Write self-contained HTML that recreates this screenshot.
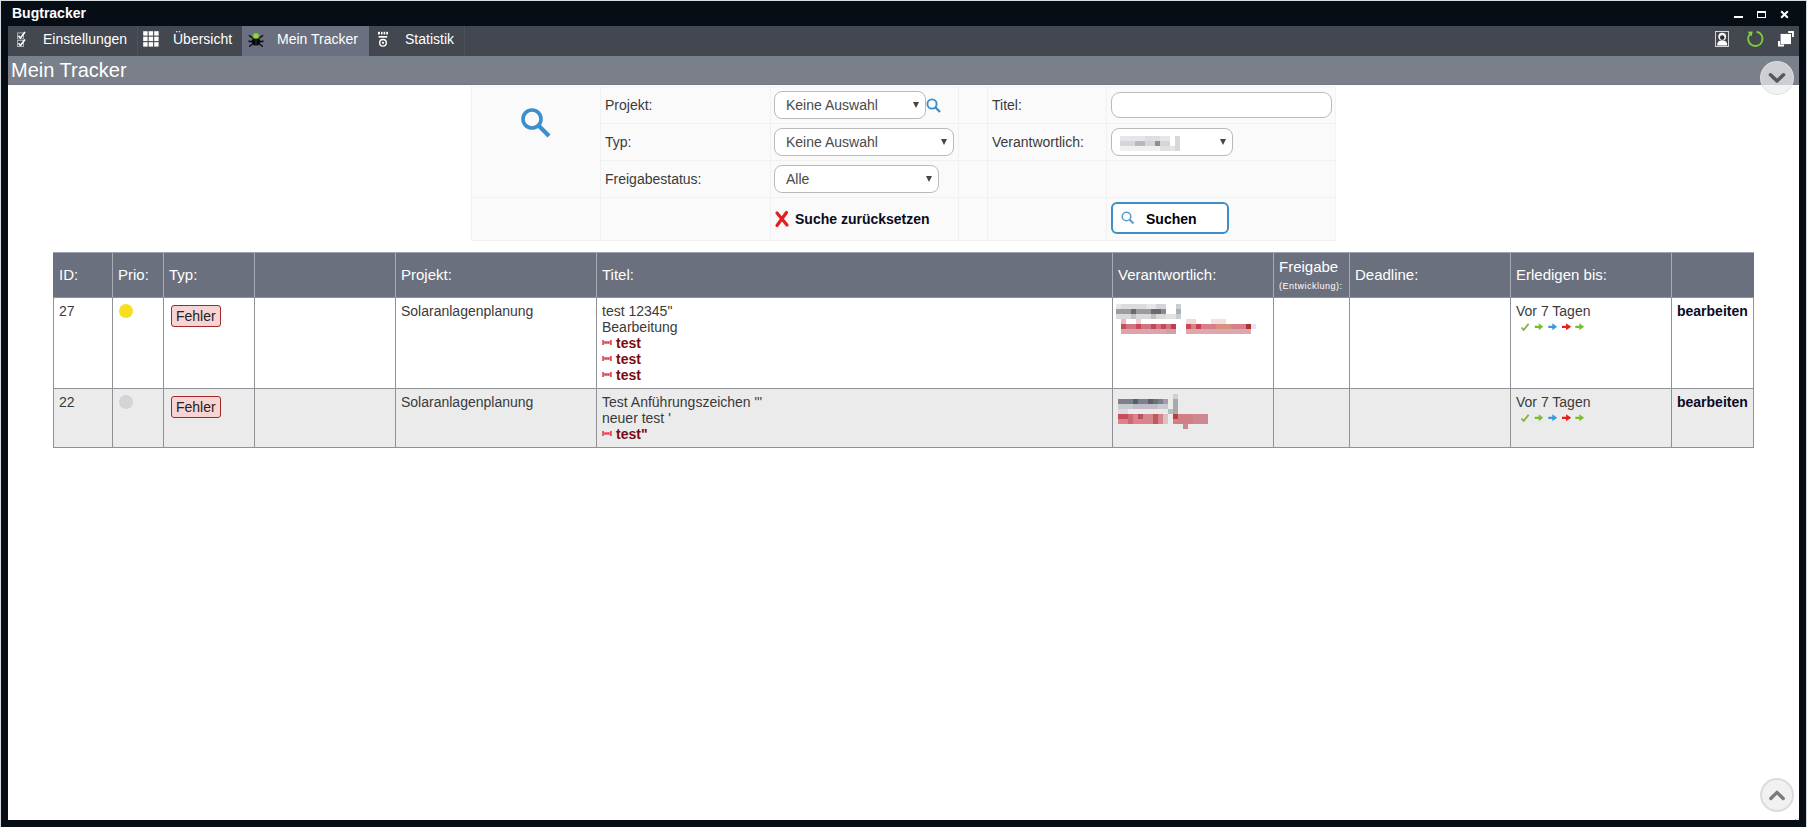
<!DOCTYPE html>
<html><head><meta charset="utf-8">
<style>
*{box-sizing:border-box;margin:0;padding:0}
html,body{width:1807px;height:827px;overflow:hidden;background:#d6d9dd;font-family:"Liberation Sans",sans-serif}
.a{position:absolute}
#frame{left:1px;top:1px;width:1805px;height:826px;background:#070d15}
#wtitle{left:12px;top:5px;color:#fff;font-weight:bold;font-size:14px;line-height:16px}
#menubar{left:8px;top:26px;width:1791px;height:30px;background:#43474f}
.tab{top:0;height:30px;color:#fff;font-size:14px;line-height:30px}
.tab .t{position:absolute;top:0}
.sep{top:0;width:1px;height:30px;background:#4d5159}
#titlebar{left:8px;top:56px;width:1791px;height:29px;background:linear-gradient(#77818c,#7a808a 40%,#7a7f8a)}
#ttext{left:3px;top:2px;color:#fff;font-size:20px;line-height:24px}
#content{left:8px;top:85px;width:1791px;height:735px;background:#fff}
.lbl{color:#3a3a3a;font-size:14px;line-height:16px}
.sel{background:#fff;border:1px solid #bababa;border-radius:8px;color:#4a4a4a;font-size:14px;line-height:16px}
.sel .v{position:absolute;left:11px;top:5px}
.sel .arr{position:absolute;top:10px;width:0;height:0;border-left:3px solid transparent;border-right:3px solid transparent;border-top:6px solid #454545}
.hd{color:#fff;font-size:15px;line-height:17px}
.bugi{position:absolute;width:10px;height:5px}
.bugi svg{display:block}
.cell{color:#3a3a3a;font-size:14px;line-height:16px}
</style></head><body>
<div class="a" id="frame"></div>
<div class="a" id="wtitle">Bugtracker</div>

<div class="a" id="menubar">
  <div class="a tab" style="left:234px;width:127px;background:#6b7080"></div>
  <div class="a sep" style="left:129px"></div>
  <div class="a sep" style="left:456px"></div>
  <div class="a" style="left:35px;top:0;color:#fff;font-size:14px;line-height:27px">Einstellungen</div>
  <div class="a" style="left:165px;top:0;color:#fff;font-size:14px;line-height:27px">Übersicht</div>
  <div class="a" style="left:269px;top:0;color:#fff;font-size:14px;line-height:27px">Mein Tracker</div>
  <div class="a" style="left:397px;top:0;color:#fff;font-size:14px;line-height:27px">Statistik</div>
</div>

<div class="a" id="titlebar"><div class="a" id="ttext">Mein Tracker</div><div class="a" style="left:0;top:28px;width:1791px;height:1px;background:#72777f"></div></div>
<div class="a" id="content"></div>

<!-- search form -->
<div class="a" style="left:471px;top:86px;width:865px;height:155px;background:#fafafa;border-top:1px solid #f0f2f4;border-left:1px solid #f2f2f2;border-bottom:1px solid #f1f1f1;border-right:1px solid #f4f4f4"></div>
<div class="a" style="left:600px;top:86px;width:1px;height:154px;background:#f1f1f1"></div>
<div class="a" style="left:770px;top:86px;width:1px;height:154px;background:#f1f1f1"></div>
<div class="a" style="left:958px;top:86px;width:1px;height:154px;background:#f1f1f1"></div>
<div class="a" style="left:987px;top:86px;width:1px;height:154px;background:#f1f1f1"></div>
<div class="a" style="left:1106px;top:86px;width:1px;height:154px;background:#f1f1f1"></div>
<div class="a" style="left:600px;top:123px;width:736px;height:1px;background:#f1f1f1"></div>
<div class="a" style="left:600px;top:160px;width:736px;height:1px;background:#f1f1f1"></div>
<div class="a" style="left:471px;top:197px;width:865px;height:1px;background:#f1f1f1"></div>

<svg class="a" style="left:518px;top:105px" width="36" height="36" viewBox="0 0 36 36"><circle cx="14" cy="14" r="9" fill="none" stroke="#3d8fcc" stroke-width="3.6"/><line x1="21" y1="21" x2="31" y2="31" stroke="#3d8fcc" stroke-width="4.2"/></svg>

<div class="a lbl" style="left:605px;top:97px">Projekt:</div>
<div class="a lbl" style="left:605px;top:134px">Typ:</div>
<div class="a lbl" style="left:605px;top:171px">Freigabestatus:</div>
<div class="a lbl" style="left:992px;top:97px">Titel:</div>
<div class="a lbl" style="left:992px;top:134px">Verantwortlich:</div>

<div class="a sel" style="left:774px;top:91px;width:152px;height:28px"><span class="v">Keine Auswahl</span><span class="arr" style="left:138px"></span></div>
<svg class="a" style="left:925px;top:97px" width="18" height="18" viewBox="0 0 18 18"><circle cx="7" cy="7" r="4.6" fill="none" stroke="#3d8fcc" stroke-width="1.9"/><line x1="10.5" y1="10.5" x2="15" y2="15" stroke="#3d8fcc" stroke-width="2.4"/></svg>
<div class="a sel" style="left:774px;top:128px;width:180px;height:28px"><span class="v">Keine Auswahl</span><span class="arr" style="left:166px"></span></div>
<div class="a sel" style="left:774px;top:165px;width:165px;height:28px"><span class="v">Alle</span><span class="arr" style="left:151px"></span></div>
<div class="a sel" style="left:1111px;top:92px;width:221px;height:26px;border-radius:9px"></div>
<div class="a sel" style="left:1111px;top:128px;width:122px;height:28px"><span class="arr" style="left:108px"></span></div>

<svg class="a" style="left:774px;top:210px" width="16" height="18" viewBox="0 0 16 18"><path d="M3 3 L13 15 M12.5 2.5 L3 15.5" stroke="#e41e1e" stroke-width="3.2" stroke-linecap="round" fill="none"/></svg>
<div class="a" style="left:795px;top:211px;font-size:14px;font-weight:bold;color:#0b0a24;line-height:16px">Suche zurücksetzen</div>

<div class="a" style="left:1111px;top:202px;width:118px;height:32px;border:2px solid #3d8ec9;border-radius:6px;background:#fff"></div>
<svg class="a" style="left:1120px;top:210px" width="16" height="16" viewBox="0 0 16 16"><circle cx="6.5" cy="6.5" r="4.3" fill="none" stroke="#5b9fd0" stroke-width="1.6"/><line x1="9.5" y1="9.5" x2="13.5" y2="13.5" stroke="#5b9fd0" stroke-width="2.2"/></svg>
<div class="a" style="left:1146px;top:211px;font-size:14px;font-weight:bold;color:#000;line-height:16px">Suchen</div>


<!-- window controls -->
<div class="a" style="left:1734px;top:16px;width:9px;height:2px;background:#fff"></div>
<div class="a" style="left:1757px;top:11px;width:9px;height:7px;border:1px solid #fff;border-top-width:2px"></div>
<svg class="a" style="left:1780px;top:10px" width="9" height="9" viewBox="0 0 9 9"><path d="M1.2 1.2 L7.8 7.8 M7.8 1.2 L1.2 7.8" stroke="#fff" stroke-width="2"/></svg>

<!-- menu icons -->
<svg class="a" style="left:16px;top:30px" width="12" height="18" viewBox="0 0 12 18"><rect x="1.5" y="2.9" width="6" height="6" fill="none" stroke="#a9abb0" stroke-width="1"/><rect x="1.5" y="10.5" width="6" height="6" fill="none" stroke="#a9abb0" stroke-width="1"/><path d="M2.5 5.8 L4.5 8 L9 2" stroke="#fff" stroke-width="1.6" fill="none"/><path d="M2.5 13.3 L4.5 15.5 L9 9.5" stroke="#fff" stroke-width="1.6" fill="none"/></svg>
<svg class="a" style="left:143px;top:31px" width="16" height="16" viewBox="0 0 16 16" fill="#fff"><rect x="0.2" y="0.2" width="4.4" height="4.4"/><rect x="5.7" y="0.2" width="4.4" height="4.4"/><rect x="11.2" y="0.2" width="4.4" height="4.4"/><rect x="0.2" y="5.7" width="4.4" height="4.4"/><rect x="5.7" y="5.7" width="4.4" height="4.4"/><rect x="11.2" y="5.7" width="4.4" height="4.4"/><rect x="0.2" y="11.2" width="4.4" height="4.4"/><rect x="5.7" y="11.2" width="4.4" height="4.4"/><rect x="11.2" y="11.2" width="4.4" height="4.4"/></svg>
<svg class="a" style="left:246px;top:29px" width="20" height="20" viewBox="0 0 20 20"><g stroke="#14151b" stroke-width="1.6" fill="none" stroke-linecap="round"><path d="M6.5 8.8 L3.4 6.6"/><path d="M13.5 8.8 L16.6 6.6"/><path d="M6 12.6 L3 12.4"/><path d="M14 12.6 L17 12.4"/><path d="M6.5 15 L3.8 17.2"/><path d="M13.5 15 L16.2 17.2"/></g><ellipse cx="10" cy="12.6" rx="4.3" ry="4" fill="#07070f"/><path d="M6.6 9.5 A3.4 3.4 0 0 1 13.4 9.5 L13.2 8.6 A3.2 3.8 0 0 0 6.8 8.6 Z" fill="#4d8a1e"/><ellipse cx="10" cy="6.8" rx="3.3" ry="3" fill="#9ccc52" stroke="#4d8a1e" stroke-width="0.7"/><line x1="10" y1="10.2" x2="10" y2="16" stroke="#3a3a44" stroke-width="0.8"/></svg>
<svg class="a" style="left:376px;top:30px" width="14" height="18" viewBox="0 0 14 18"><g fill="#fff"><rect x="2" y="1.8" width="2" height="2.6"/><rect x="5" y="1.8" width="1.6" height="2.6"/><rect x="7.6" y="1.8" width="1.6" height="2.6"/><rect x="10.2" y="1.8" width="1.8" height="2.6"/><rect x="2.6" y="6" width="8.6" height="1.7"/></g><circle cx="7" cy="12.8" r="3.3" fill="none" stroke="#fff" stroke-width="1.4"/><circle cx="7" cy="12.8" r="1.1" fill="#fff"/></svg>

<!-- right menu icons -->
<svg class="a" style="left:1714px;top:30px" width="17" height="18" viewBox="0 0 17 18"><rect x="1.5" y="1.5" width="13" height="15" fill="none" stroke="#d4d5d8" stroke-width="1"/><path d="M3.2 15.4 C3.2 11.6 5 10.4 8.2 10.4 C11.4 10.4 13.2 11.6 13.2 15.4 Z" fill="#fff"/><circle cx="8.2" cy="6.6" r="3.9" fill="#f4f4f4"/><ellipse cx="8.2" cy="7.6" rx="2.2" ry="2.3" fill="#2a2c33"/></svg>
<svg class="a" style="left:1745px;top:29px" width="20" height="20" viewBox="0 0 20 20"><path d="M11.6 2.7 A7.2 7.2 0 1 1 5.4 4.6" fill="none" stroke="#2e5c14" stroke-opacity="0.55" stroke-width="3"/><path d="M11.6 2.7 A7.2 7.2 0 1 1 5.4 4.6" fill="none" stroke="#84c44a" stroke-width="1.9"/><path d="M2.6 2.8 L7.6 2.4 L6.6 7.4 Z" fill="#8fd040"/></svg>
<svg class="a" style="left:1777px;top:30px" width="18" height="18" viewBox="0 0 18 18" fill="#fff"><rect x="3.6" y="3.9" width="10.4" height="10.2"/><path d="M11.2 1 H16.9 V7 H15 V3 H11.2 Z"/><path d="M1 11 H3 V14.6 H7 V16.6 H1 Z"/></svg>

<!-- chevron buttons -->
<div class="a" style="left:1760px;top:61px;width:34px;height:34px;border-radius:50%;background:rgba(236,237,239,0.72);border:1.5px solid rgba(222,224,228,0.85)"></div>
<svg class="a" style="left:1767px;top:68px" width="20" height="20" viewBox="0 0 20 20"><path d="M3.5 6.8 L10 13 L16.5 6.8" fill="none" stroke="#55585e" stroke-width="3.6" stroke-linecap="round" stroke-linejoin="round"/></svg>
<div class="a" style="left:1760px;top:778px;width:34px;height:34px;border-radius:50%;background:#f1f1f1;border:2px solid #dcdcdc"></div>
<svg class="a" style="left:1767px;top:785px" width="20" height="20" viewBox="0 0 20 20"><path d="M3.8 13.5 L10 7.3 L16.2 13.5" fill="none" stroke="#7b7b7b" stroke-width="3.3" stroke-linecap="round" stroke-linejoin="round"/></svg>

<div class="a" style="left:1797px;top:818px;width:2px;height:2px;background:#e8e8e8"></div><div class="a" style="left:1795px;top:819px;width:1px;height:1px;background:#aaa"></div>
<!-- table -->
<div class="a" style="left:53px;top:252px;width:1701px;height:45px;background:#6a707e;border-top:1px solid #9ea3ad"></div>
<div class="a" style="left:53px;top:297px;width:1701px;height:92px;background:#fff"></div>
<div class="a" style="left:53px;top:389px;width:1701px;height:59px;background:#ebebec"></div>
<div class="a" style="left:53px;top:297px;width:1701px;height:1px;background:#8f9197"></div>
<div class="a" style="left:53px;top:388px;width:1701px;height:1px;background:#8f9197"></div>
<div class="a" style="left:53px;top:447px;width:1701px;height:1px;background:#8f9197"></div>
<div class="a" style="left:53px;top:297px;width:1px;height:151px;background:#8f9197"></div>
<div class="a" style="left:112px;top:297px;width:1px;height:151px;background:#8f9197"></div>
<div class="a" style="left:112px;top:253px;width:1px;height:44px;background:#a7abb3"></div>
<div class="a" style="left:163px;top:297px;width:1px;height:151px;background:#8f9197"></div>
<div class="a" style="left:163px;top:253px;width:1px;height:44px;background:#a7abb3"></div>
<div class="a" style="left:254px;top:297px;width:1px;height:151px;background:#8f9197"></div>
<div class="a" style="left:254px;top:253px;width:1px;height:44px;background:#a7abb3"></div>
<div class="a" style="left:395px;top:297px;width:1px;height:151px;background:#8f9197"></div>
<div class="a" style="left:395px;top:253px;width:1px;height:44px;background:#a7abb3"></div>
<div class="a" style="left:596px;top:297px;width:1px;height:151px;background:#8f9197"></div>
<div class="a" style="left:596px;top:253px;width:1px;height:44px;background:#a7abb3"></div>
<div class="a" style="left:1112px;top:297px;width:1px;height:151px;background:#8f9197"></div>
<div class="a" style="left:1112px;top:253px;width:1px;height:44px;background:#a7abb3"></div>
<div class="a" style="left:1273px;top:297px;width:1px;height:151px;background:#8f9197"></div>
<div class="a" style="left:1273px;top:253px;width:1px;height:44px;background:#a7abb3"></div>
<div class="a" style="left:1349px;top:297px;width:1px;height:151px;background:#8f9197"></div>
<div class="a" style="left:1349px;top:253px;width:1px;height:44px;background:#a7abb3"></div>
<div class="a" style="left:1510px;top:297px;width:1px;height:151px;background:#8f9197"></div>
<div class="a" style="left:1510px;top:253px;width:1px;height:44px;background:#a7abb3"></div>
<div class="a" style="left:1671px;top:297px;width:1px;height:151px;background:#8f9197"></div>
<div class="a" style="left:1671px;top:253px;width:1px;height:44px;background:#a7abb3"></div>
<div class="a" style="left:1753px;top:297px;width:1px;height:151px;background:#8f9197"></div>
<div class="a hd" style="left:59px;top:266px">ID:</div>
<div class="a hd" style="left:118px;top:266px">Prio:</div>
<div class="a hd" style="left:169px;top:266px">Typ:</div>
<div class="a hd" style="left:401px;top:266px">Projekt:</div>
<div class="a hd" style="left:602px;top:266px">Titel:</div>
<div class="a hd" style="left:1118px;top:266px">Verantwortlich:</div>
<div class="a hd" style="left:1355px;top:266px">Deadline:</div>
<div class="a hd" style="left:1516px;top:266px">Erledigen bis:</div>
<div class="a hd" style="left:1279px;top:258px">Freigabe</div>
<div class="a" style="left:1279px;top:281px;color:#fff;font-size:9px;line-height:11px;letter-spacing:0.5px">(Entwicklung):</div>
<div class="a cell" style="left:59px;top:303px;">27</div>
<div class="a" style="left:119px;top:304px;width:14px;height:14px;border-radius:50%;background:#f7df1e"></div>
<div class="a" style="left:171px;top:305px;width:50px;height:22px;background:#f8d3d3;border:1px solid #a02828;border-radius:3px;color:#222;font-size:14px;line-height:21px;padding-left:4px">Fehler</div>
<div class="a cell" style="left:401px;top:303px;">Solaranlagenplanung</div>
<div class="a cell" style="left:1516px;top:303px;">Vor 7 Tagen</div>
<div class="a" style="left:1677px;top:303px;font-size:14px;font-weight:bold;color:#0b0b26;line-height:16px">bearbeiten</div>
<div class="a cell" style="left:59px;top:394px;">22</div>
<div class="a" style="left:119px;top:395px;width:14px;height:14px;border-radius:50%;background:#d4d4d6"></div>
<div class="a" style="left:171px;top:396px;width:50px;height:22px;background:#f8d3d3;border:1px solid #a02828;border-radius:3px;color:#222;font-size:14px;line-height:21px;padding-left:4px">Fehler</div>
<div class="a cell" style="left:401px;top:394px;">Solaranlagenplanung</div>
<div class="a cell" style="left:1516px;top:394px;">Vor 7 Tagen</div>
<div class="a" style="left:1677px;top:394px;font-size:14px;font-weight:bold;color:#0b0b26;line-height:16px">bearbeiten</div>
<div class="a cell" style="left:602px;top:303px;">test 12345"<br>Bearbeitung</div>
<div class="a cell" style="left:602px;top:394px;">Test Anführungszeichen "'<br>neuer test '</div>
<div class="a" style="left:616px;top:335px;font-size:14px;font-weight:bold;color:#7a0a14;line-height:16px">test</div>
<div class="bugi" style="left:602px;top:340px"><svg width="10" height="5" viewBox="0 0 10 5"><rect x="0.2" y="0" width="1.8" height="5" fill="#d24050" opacity="0.9"/><rect x="8" y="0" width="1.8" height="5" fill="#d24050" opacity="0.9"/><rect x="2" y="1" width="6" height="3" fill="#f2848e"/><circle cx="3.8" cy="2.5" r="0.9" fill="#d23848"/><circle cx="6.2" cy="2.5" r="0.9" fill="#d83850"/></svg></div>
<div class="a" style="left:616px;top:351px;font-size:14px;font-weight:bold;color:#7a0a14;line-height:16px">test</div>
<div class="bugi" style="left:602px;top:356px"><svg width="10" height="5" viewBox="0 0 10 5"><rect x="0.2" y="0" width="1.8" height="5" fill="#d24050" opacity="0.9"/><rect x="8" y="0" width="1.8" height="5" fill="#d24050" opacity="0.9"/><rect x="2" y="1" width="6" height="3" fill="#f2848e"/><circle cx="3.8" cy="2.5" r="0.9" fill="#d23848"/><circle cx="6.2" cy="2.5" r="0.9" fill="#d83850"/></svg></div>
<div class="a" style="left:616px;top:367px;font-size:14px;font-weight:bold;color:#7a0a14;line-height:16px">test</div>
<div class="bugi" style="left:602px;top:372px"><svg width="10" height="5" viewBox="0 0 10 5"><rect x="0.2" y="0" width="1.8" height="5" fill="#d24050" opacity="0.9"/><rect x="8" y="0" width="1.8" height="5" fill="#d24050" opacity="0.9"/><rect x="2" y="1" width="6" height="3" fill="#f2848e"/><circle cx="3.8" cy="2.5" r="0.9" fill="#d23848"/><circle cx="6.2" cy="2.5" r="0.9" fill="#d83850"/></svg></div>
<div class="a" style="left:616px;top:426px;font-size:14px;font-weight:bold;color:#7a0a14;line-height:16px">test"</div>
<div class="bugi" style="left:602px;top:431px"><svg width="10" height="5" viewBox="0 0 10 5"><rect x="0.2" y="0" width="1.8" height="5" fill="#d24050" opacity="0.9"/><rect x="8" y="0" width="1.8" height="5" fill="#d24050" opacity="0.9"/><rect x="2" y="1" width="6" height="3" fill="#f2848e"/><circle cx="3.8" cy="2.5" r="0.9" fill="#d23848"/><circle cx="6.2" cy="2.5" r="0.9" fill="#d83850"/></svg></div>

<div class="a" style="left:0;top:0;width:1807px;height:827px;filter:blur(0.5px)">
<!-- blurred select name -->
<div class="a" style="left:1120px;top:136px;width:50px;height:5px;background:#e6e6ea"></div>
<div class="a" style="left:1145px;top:136px;width:15px;height:5px;background:#dedee2"></div>
<div class="a" style="left:1120px;top:141px;width:50px;height:5px;background:#d6d6d8"></div>
<div class="a" style="left:1135px;top:141px;width:10px;height:5px;background:#b8b8bc"></div>
<div class="a" style="left:1155px;top:141px;width:5px;height:5px;background:#909094"></div>
<div class="a" style="left:1160px;top:141px;width:10px;height:5px;background:#d0d8d4"></div>
<div class="a" style="left:1120px;top:146px;width:50px;height:5px;background:#f0f0f0"></div>
<div class="a" style="left:1160px;top:146px;width:10px;height:5px;background:#e0e0e0"></div>
<div class="a" style="left:1175px;top:136px;width:5px;height:15px;background:#d8d8d8"></div>
<div class="a" style="left:1170px;top:146px;width:5px;height:5px;background:#e4e4e4"></div>

<!-- blurred names -->
<div class="a" style="left:1116px;top:304px;width:50px;height:5px;background:#e6e6ea"></div>
<div class="a" style="left:1121px;top:304px;width:25px;height:5px;background:#dcdce0"></div>
<div class="a" style="left:1156px;top:304px;width:10px;height:5px;background:#d4d4dc"></div>
<div class="a" style="left:1116px;top:309px;width:50px;height:5px;background:#9c9c9e"></div>
<div class="a" style="left:1131px;top:309px;width:5px;height:5px;background:#6e6a6e"></div>
<div class="a" style="left:1151px;top:309px;width:10px;height:5px;background:#6a6a6c"></div>
<div class="a" style="left:1161px;top:309px;width:5px;height:5px;background:#8a8898"></div>
<div class="a" style="left:1116px;top:314px;width:50px;height:5px;background:#dadadc"></div>
<div class="a" style="left:1131px;top:314px;width:5px;height:5px;background:#c4c4c4"></div>
<div class="a" style="left:1151px;top:314px;width:5px;height:5px;background:#c0c0c0"></div>
<div class="a" style="left:1166px;top:314px;width:10px;height:5px;background:#e2e2e0"></div>
<div class="a" style="left:1176px;top:304px;width:5px;height:15px;background:#c8ccd4"></div>
<div class="a" style="left:1176px;top:309px;width:5px;height:5px;background:#aab0b8"></div>
<div class="a" style="left:1121px;top:319px;width:5px;height:5px;background:#eab8be"></div>
<div class="a" style="left:1136px;top:319px;width:5px;height:5px;background:#f0d0d4"></div>
<div class="a" style="left:1186px;top:319px;width:10px;height:5px;background:#f0d8dc"></div>
<div class="a" style="left:1211px;top:319px;width:15px;height:5px;background:#f4e0e0"></div>
<div class="a" style="left:1121px;top:324px;width:55px;height:5px;background:#d07480"></div>
<div class="a" style="left:1121px;top:324px;width:5px;height:5px;background:#c0505c"></div>
<div class="a" style="left:1136px;top:324px;width:5px;height:5px;background:#c84a58"></div>
<div class="a" style="left:1151px;top:324px;width:5px;height:5px;background:#bc4a58"></div>
<div class="a" style="left:1161px;top:324px;width:5px;height:5px;background:#c44a58"></div>
<div class="a" style="left:1171px;top:324px;width:5px;height:5px;background:#c03c50"></div>
<div class="a" style="left:1186px;top:324px;width:65px;height:5px;background:#d8808a"></div>
<div class="a" style="left:1186px;top:324px;width:5px;height:5px;background:#c44a54"></div>
<div class="a" style="left:1196px;top:324px;width:5px;height:5px;background:#c8404e"></div>
<div class="a" style="left:1216px;top:324px;width:15px;height:5px;background:#d89080"></div>
<div class="a" style="left:1246px;top:324px;width:5px;height:5px;background:#a83434"></div>
<div class="a" style="left:1121px;top:329px;width:55px;height:5px;background:#dca4ac"></div>
<div class="a" style="left:1186px;top:329px;width:65px;height:5px;background:#dca8ac"></div>
<div class="a" style="left:1166px;top:329px;width:10px;height:5px;background:#d0a0a8"></div>
<div class="a" style="left:1251px;top:324px;width:5px;height:5px;background:#e4e4f4"></div>
<div class="a" style="left:1118px;top:399px;width:50px;height:5px;background:#80808a"></div>
<div class="a" style="left:1133px;top:399px;width:5px;height:5px;background:#506078"></div>
<div class="a" style="left:1153px;top:399px;width:5px;height:5px;background:#6e7070"></div>
<div class="a" style="left:1163px;top:399px;width:5px;height:5px;background:#a898b0"></div>
<div class="a" style="left:1148px;top:399px;width:5px;height:5px;background:#5c6064"></div>
<div class="a" style="left:1118px;top:404px;width:50px;height:5px;background:#c8ccd0"></div>
<div class="a" style="left:1133px;top:404px;width:25px;height:5px;background:#c0bcc8"></div>
<div class="a" style="left:1118px;top:409px;width:10px;height:5px;background:#dcdcdc"></div>
<div class="a" style="left:1168px;top:409px;width:10px;height:5px;background:#b8bcbc"></div>
<div class="a" style="left:1173px;top:394px;width:5px;height:5px;background:#d0d0d0"></div>
<div class="a" style="left:1173px;top:399px;width:5px;height:15px;background:#a8aaaa"></div>
<div class="a" style="left:1118px;top:414px;width:50px;height:10px;background:#d8848c"></div>
<div class="a" style="left:1118px;top:414px;width:10px;height:5px;background:#c84c5c"></div>
<div class="a" style="left:1128px;top:414px;width:5px;height:10px;background:#d06870"></div>
<div class="a" style="left:1138px;top:414px;width:5px;height:5px;background:#b85060"></div>
<div class="a" style="left:1153px;top:414px;width:5px;height:10px;background:#c0585c"></div>
<div class="a" style="left:1163px;top:414px;width:5px;height:10px;background:#dcc0c4"></div>
<div class="a" style="left:1173px;top:414px;width:35px;height:10px;background:#d27e86"></div>
<div class="a" style="left:1173px;top:414px;width:5px;height:5px;background:#b8403c"></div>
<div class="a" style="left:1193px;top:414px;width:15px;height:10px;background:#d08890"></div>
<div class="a" style="left:1183px;top:424px;width:5px;height:5px;background:#d08890"></div>

</div>
<!-- extras -->
<svg class="a" style="left:1520px;top:323px" width="72" height="10" viewBox="0 0 72 10"><path d="M1.6 4.5 L3.6 7 L8.6 0.9" fill="none" stroke="#7fae3c" stroke-width="1.7"/><path d="M14.8 2.8 H18.8 V0.3 L23.2 3.8 L18.8 7.3 V5 H14.8 Z" fill="#78c02a"/><path d="M28.3 2.8 H32.3 V0.3 L37.2 3.8 L32.3 7.3 V5 H28.3 Z" fill="#3a9bd8"/><path d="M42 2.8 H46.1 V0.3 L51.2 3.8 L46.1 7.3 V5 H42 Z" fill="#ec1c1c"/><path d="M55.3 2.8 H59.3 V0.3 L64.2 3.8 L59.3 7.3 V5 H55.3 Z" fill="#78c02a"/></svg>
<svg class="a" style="left:1520px;top:414px" width="72" height="10" viewBox="0 0 72 10"><path d="M1.6 4.5 L3.6 7 L8.6 0.9" fill="none" stroke="#7fae3c" stroke-width="1.7"/><path d="M14.8 2.8 H18.8 V0.3 L23.2 3.8 L18.8 7.3 V5 H14.8 Z" fill="#78c02a"/><path d="M28.3 2.8 H32.3 V0.3 L37.2 3.8 L32.3 7.3 V5 H28.3 Z" fill="#3a9bd8"/><path d="M42 2.8 H46.1 V0.3 L51.2 3.8 L46.1 7.3 V5 H42 Z" fill="#ec1c1c"/><path d="M55.3 2.8 H59.3 V0.3 L64.2 3.8 L59.3 7.3 V5 H55.3 Z" fill="#78c02a"/></svg>
</body></html>
